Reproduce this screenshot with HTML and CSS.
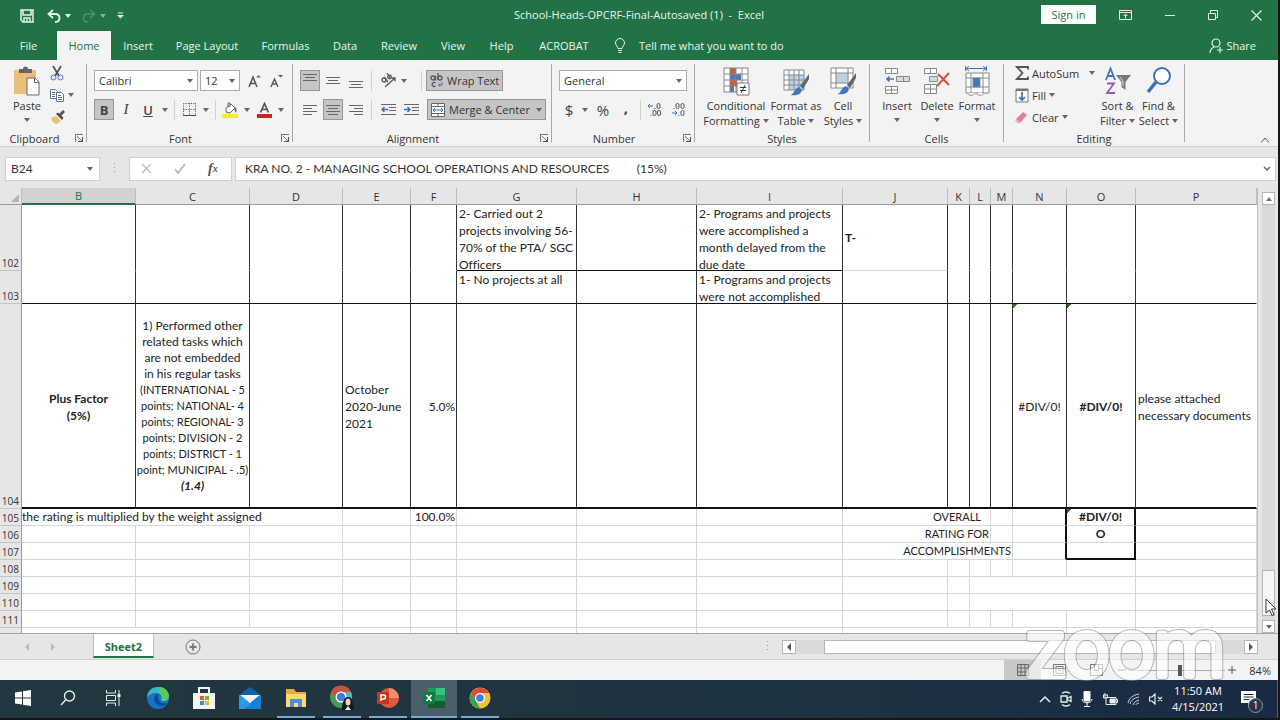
FILE: index.html
```html
<!DOCTYPE html>
<html lang="en">
<head>
<meta charset="utf-8">
<title>School-Heads-OPCRF-Final-Autosaved (1) - Excel</title>
<link rel="stylesheet" href="styles.css">
</head>
<body>
<div class="screen">
<header class="titlebar">
  <div class="quick">
    <button aria-label="Save"><svg width="14" height="14" viewBox="0 0 14 14" fill="none" stroke="#e3f3e8" stroke-width="1.5"><path d="M1 1h12v12H3L1 11zM3 1v5h8V1M4 13V9h6v4M7 10v3"/></svg></button>
    <button aria-label="Undo"><svg width="14" height="14" viewBox="0 0 14 14" fill="none" stroke="#e3f3e8" stroke-width="1.8"><path d="M6 1L1.500 5 6 9M2 5h6c3 0 4.500 1.500 4.500 4S11 13 8 13"/></svg></button>
    <i class="caret light"></i>
    <button class="faded" aria-label="Redo"><svg width="14" height="14" viewBox="0 0 14 14" fill="none" stroke="#79b58d" stroke-width="1.500"><path d="M8 1l4.500 4L8 9M12 5H6C3 5 1.500 6.500 1.500 9S3 13 6 13"/></svg></button>
    <i class="caret light faded"></i>
    <button class="more" aria-label="Customize"><svg width="7" height="7" viewBox="0 0 7 7"><path d="M1 .5h5v1H1zM0 3h7L3.500 6.500z" fill="#e3f3e8"/></svg></button>
  </div>
  <h1>School-Heads-OPCRF-Final-Autosaved (1)&nbsp; -&nbsp; Excel</h1>
  <div class="winctl">
    <button class="signin">Sign in</button>
    <button aria-label="Ribbon options"><svg width="13" height="12" viewBox="0 0 13 12" fill="none" stroke="#e3f3e8"><path d="M.5 1.500h12v9H.5zM.5 3.500h12M6.500 9.500v-4M4.500 7l2-2 2 2"/></svg></button>
    <button aria-label="Minimize"><svg width="10" height="12" viewBox="0 0 10 12"><path d="M0 6.500h10" stroke="#e3f3e8"/></svg></button>
    <button aria-label="Restore"><svg width="10" height="12" viewBox="0 0 10 12" fill="none" stroke="#e3f3e8"><path d="M.5 4.500h7v6h-7zM2.500 4V1.500h7v7H8"/></svg></button>
    <button aria-label="Close"><svg width="11" height="12" viewBox="0 0 11 12"><path d="M.5 1.500l10 10M10.500 1.500l-10 10" stroke="#e3f3e8" stroke-width="1.200"/></svg></button>
  </div>
</header>
<nav class="tabs">
  <button class="t-file">File</button><button class="t-home active">Home</button><button class="t-insert">Insert</button><button class="t-page">Page Layout</button><button class="t-form">Formulas</button><button class="t-data">Data</button><button class="t-rev">Review</button><button class="t-view">View</button><button class="t-help">Help</button><button class="t-acro">ACROBAT</button>
  <button class="tell"><svg width="10" height="15" viewBox="0 0 10 15" fill="none" stroke="#e3f3e8"><path d="M3 10.500c0-2-2.500-3-2.500-5.500a4.500 4.500 0 0 1 9 0c0 2.500-2.500 3.500-2.500 5.500zM3 12.500h4M3.500 14.500h3"/></svg><span>Tell me what you want to do</span></button>
  <button class="share"><svg width="15" height="16" viewBox="0 0 15 16" fill="none" stroke="#e3f3e8" stroke-width="1.200"><circle cx="7" cy="5" r="4"/><path d="M1 15c0-3 2-5 4-6M8 12h6M11 9v6"/></svg><span>Share</span></button>
</nav>
<section class="ribbon">
  <div class="group g-clip">
    <div class="body">
      <button class="big"><svg width="28" height="30" viewBox="0 0 28 30"><path d="M1 4h22v24H1z" fill="#e8c07a"/><path d="M6 3h4a2.500 2.500 0 0 1 5 0h4v4H6z" fill="#666"/><path d="M14 12h8l4 4v13H14z" fill="#fff" stroke="#666"/><path d="M21.500 12v4.500H26" fill="none" stroke="#666"/></svg><span>Paste</span><i class="caret"></i></button>
      <div class="stack">
        <button aria-label="Cut"><svg width="14" height="15" viewBox="0 0 14 15" fill="none"><path d="M3 0l6 10M11 0L5 10" stroke="#555" stroke-width="1.800"/><circle cx="3.500" cy="11.500" r="2.500" stroke="#4a7ab8"/><circle cx="10.500" cy="11.500" r="2.500" stroke="#4a7ab8"/></svg></button>
        <button aria-label="Copy"><svg width="14" height="14" viewBox="0 0 14 14" fill="#fff" stroke="#5b6e8c"><path d="M.5 1.500h5l2 2v7h-7z"/><path d="M2 4.500h3M2 6.500h3M2 8.500h3"/><path d="M6.500 4.500h5l2 2v7h-7z"/><path d="M8 7.500h3M8 9.500h4M8 11.500h4"/></svg><i class="caret"></i></button>
        <button aria-label="Format painter"><svg width="16" height="14" viewBox="0 0 16 14"><path d="M1 8l5-2 5 5-4 3c-3 0-5-3-6-6z" fill="#dfc678"/><path d="M6 4l6 6 1.500-2-2-2.500L15 2l-2-2-3.500 3.500-2-1z" fill="#555"/></svg></button>
      </div>
    </div>
    <footer>Clipboard<i class="launch"></i></footer>
  </div>
  <div class="group g-font">
    <div class="body rows">
      <div class="row">
        <label class="combo wide"><input aria-label="Font" value="Calibri"><i class="caret"></i></label>
        <label class="combo size"><input aria-label="Font size" value="12"><i class="caret"></i></label>
        <button class="ib grow" aria-label="Increase font size"><svg width="13" height="14" viewBox="0 0 13 14" fill="none"><path d="M1 13L5 3l4 10M2.500 9.500h5" stroke="#555" stroke-width="1.500"/><path d="M8 3.500h5L10.500 1z" fill="#3b6fb5"/></svg></button>
        <button class="ib" aria-label="Decrease font size"><svg width="13" height="14" viewBox="0 0 13 14" fill="none"><path d="M1 13l3.500-8L8 13M2 10h5" stroke="#555" stroke-width="1.400"/><path d="M8 1h5l-2.500 2.500z" fill="#555"/></svg></button>
      </div>
      <div class="row">
        <button class="ib on b">B</button><button class="ib i">I</button><button class="ib u">U</button><i class="caret"></i><i class="sep"></i>
        <button class="ib" aria-label="Borders"><svg width="13" height="13" viewBox="0 0 13 13" fill="none"><path d="M.5 0v12M6.500 0v12M12.500 0v12M0 .5h13M0 6.500h13" stroke="#777" stroke-dasharray="1.500 1"/><path d="M0 12.500h13" stroke="#444"/></svg></button><i class="caret"></i><i class="sep"></i>
        <button class="ib" aria-label="Fill color"><svg width="16" height="16" viewBox="0 0 16 16"><path d="M4 6l5-4 4 4-5 5-4-1z" fill="#fff" stroke="#666"/><path d="M6 5V1h2v4" fill="none" stroke="#666"/><path d="M12 5c3 0 3 3 2 6-2-2-1-4-2-6z" fill="#3b6fb5"/><path d="M0 12h16v4H0z" fill="#f5ee23"/></svg></button><i class="caret"></i>
        <button class="ib fc" aria-label="Font color"><svg width="15" height="16" viewBox="0 0 15 16"><path d="M3.500 10.500L7.500 1.500l4 9M5 7.500h5" fill="none" stroke="#555" stroke-width="1.700"/><path d="M0 12h15v4H0z" fill="#cf1f25"/></svg></button><i class="caret"></i>
      </div>
    </div>
    <footer>Font<i class="launch"></i></footer>
  </div>
  <div class="group g-align">
    <div class="body rows">
      <div class="row">
        <button class="ib on" aria-label="Top align"><svg width="14" height="16" viewBox="0 0 14 16"><path d="M0 1.500h14M2 4.500h10M0 7.500h14" stroke="#666"/></svg></button>
        <button class="ib" aria-label="Middle align"><svg width="14" height="16" viewBox="0 0 14 16"><path d="M0 4.500h14M2 7.500h10M0 10.500h14" stroke="#666"/></svg></button>
        <button class="ib" aria-label="Bottom align"><svg width="14" height="16" viewBox="0 0 14 16"><path d="M0 8.500h14M2 11.500h10M0 14.500h14" stroke="#666"/></svg></button>
        <i class="sep"></i>
        <button class="ib orient" aria-label="Orientation"><svg width="17" height="15" viewBox="0 0 17 15"><g fill="none" stroke="#555" stroke-width="1.300"><circle cx="4" cy="7" r="2"/><path d="M4 4l4 5M7 0l3.500 5.500"/><circle cx="9.500" cy="4" r="1.800"/><path d="M5 14L15 5M11.500 5H15v3.500"/></g></svg></button><i class="caret"></i>
        <i class="sep s2"></i>
        <button class="tb on"><svg width="13" height="15" viewBox="0 0 13 15" fill="none" stroke="#555" stroke-width="1.300"><circle cx="3" cy="5" r="2"/><path d="M5.500 3v4.500M8 0v7"/><circle cx="10" cy="5" r="2"/><path d="M5.500 10a2 2 0 1 0 0 3"/><path d="M12 9v3H8.500M10 10.500L8.500 12l1.500 1.500" stroke="#3b6fb5" stroke-width="1"/></svg>Wrap Text</button>
      </div>
      <div class="row">
        <button class="ib" aria-label="Align left"><svg width="14" height="12" viewBox="0 0 14 12"><path d="M0 1.500h14M0 4.500h9M0 7.500h14M0 10.500h9" stroke="#666"/></svg></button>
        <button class="ib on" aria-label="Center"><svg width="14" height="12" viewBox="0 0 14 12"><path d="M0 1.500h14M2 4.500h10M0 7.500h14M2 10.500h10" stroke="#666"/></svg></button>
        <button class="ib" aria-label="Align right"><svg width="14" height="12" viewBox="0 0 14 12"><path d="M0 1.500h14M5 4.500h9M0 7.500h14M5 10.500h9" stroke="#666"/></svg></button>
        <i class="sep"></i>
        <button class="ib" aria-label="Decrease indent"><svg width="15" height="12" viewBox="0 0 15 12"><path d="M0 .5h15M8 3.500h7M8 6.500h7M0 10.500h15" stroke="#666"/><path d="M7 5.500H1M3.500 3L1 5.500 3.500 8" fill="none" stroke="#3b6fb5" stroke-width="1.500"/></svg></button>
        <button class="ib" aria-label="Increase indent"><svg width="15" height="12" viewBox="0 0 15 12"><path d="M0 .5h15M8 3.500h7M8 6.500h7M0 10.500h15" stroke="#666"/><path d="M0 5.500h6M3.500 3L6 5.500 3.500 8" fill="none" stroke="#3b6fb5" stroke-width="1.500"/></svg></button>
        <i class="sep s3"></i>
        <button class="tb on merge"><svg width="14" height="14" viewBox="0 0 14 14" fill="#fff" stroke="#666"><path d="M.5.500h13v13H.5zM.5 3.500h13M.5 10.500h13M7 .5v3M7 10.500v3"/><path d="M2 7h10M4 5L2 7l2 2M10 5l2 2-2 2" fill="none" stroke="#3b6fb5"/></svg>Merge &amp; Center<i class="caret"></i></button>
      </div>
    </div>
    <footer>Alignment<i class="launch"></i></footer>
  </div>
  <div class="group g-num">
    <div class="body rows">
      <div class="row"><label class="combo fmt"><input aria-label="Number format" value="General"><i class="caret"></i></label></div>
      <div class="row">
        <button class="ib sym">$</button><i class="caret"></i><button class="ib sym pct">%</button><button class="ib sym comma">,</button><i class="sep"></i>
        <button class="ib dec" aria-label="Increase decimal"><svg width="14" height="13" viewBox="0 0 14 13" fill="none" stroke="#555"><path d="M6 3H1M3 1L1 3l2 2" stroke="#3b6fb5"/><rect x="10" y=".5" width="3" height="5" rx="1.500"/><rect x="6" y="7.500" width="3" height="5" rx="1.500"/><rect x="10.500" y="7.500" width="3" height="5" rx="1.500"/><path d="M7.500 5.500h1M3.500 12.500h1"/></svg></button>
        <button class="ib dec" aria-label="Decrease decimal"><svg width="14" height="13" viewBox="0 0 14 13" fill="none" stroke="#555"><path d="M1 10h5M4 8l2 2-2 2" stroke="#3b6fb5"/><rect x="5" y=".5" width="3" height="5" rx="1.500"/><rect x="10" y=".5" width="3" height="5" rx="1.500"/><rect x="10" y="7.500" width="3" height="5" rx="1.500"/><path d="M2.500 5.500h1M7.500 12.500h1"/></svg></button>
      </div>
    </div>
    <footer>Number<i class="launch"></i></footer>
  </div>
  <div class="group g-styles">
    <div class="body">
      <button class="big w1"><svg width="28" height="30" viewBox="0 0 28 30"><path d="M2 2h24v24H2z" fill="#fff"/><path d="M8 2h6v6H8zM8 14h7v6H8z" fill="#d0593f"/><path d="M8 8h11v6H8zM8 20h4v6H8z" fill="#4a7ab8"/><path d="M2 2h24v24H2zM8 2v24M14 2v24M20 2v24M2 8h24M2 14h24M2 20h24" fill="none" stroke="#888"/><path d="M15 17h12v12H15z" fill="#fff" stroke="#777"/><path d="M18 21.500h6M18 24.500h6M23 19l-4 8" stroke="#333"/></svg><span>Conditional<br>Formatting<i class="caret"></i></span></button>
      <button class="big w2"><svg width="28" height="30" viewBox="0 0 28 30"><path d="M2 4h20v20H2z" fill="#fff"/><path d="M7 9h15v15H7z" fill="#bcd3e6"/><path d="M2 4h20v20H2zM7 4v20M12 4v20M17 4v20M2 9h20M2 14h20M2 19h20" fill="none" stroke="#888"/><path d="M27 8l-9 12 3 3 6-10z" fill="#666"/><path d="M8 29c4 0 4-7 9-8l3 3c-1 5-7 6-12 5z" fill="#3b78bd"/></svg><span>Format as<br>Table<i class="caret"></i></span></button>
      <button class="big w3"><svg width="28" height="30" viewBox="0 0 28 30"><path d="M2 2h22v20H2z" fill="#fff"/><path d="M7 7h12v10H7z" fill="#bcd3e6"/><path d="M2 2h22v20H2zM7 2v20M19 2v20M2 7h22M2 17h22" fill="none" stroke="#888"/><path d="M27 7l-9 12 3 3 6-10z" fill="#666"/><path d="M8 28c4 0 4-7 9-8l3 3c-1 5-7 6-12 5z" fill="#3b78bd"/></svg><span>Cell<br>Styles<i class="caret"></i></span></button>
    </div>
    <footer>Styles</footer>
  </div>
  <div class="group g-cells">
    <div class="body">
      <button class="big w4"><svg width="28" height="30" viewBox="0 0 28 30" fill="#fff" stroke="#888"><path d="M2.500 2.500h12v5h-12zM8.500 2.500v5M2.500 20.500h12v7h-12zM8.500 20.500v7M2.500 24h12"/><path d="M13.500 10.500h13v5h-13zM20.500 10.500v5" fill="#cfdde9"/><path d="M11 13H4M6.500 10.500L4 13l2.500 2.500" fill="none" stroke="#3b78bd" stroke-width="1.700"/></svg><span>Insert</span><i class="caret"></i></button>
      <button class="big w5"><svg width="28" height="30" viewBox="0 0 28 30" fill="#fff" stroke="#888"><path d="M1.500 2.500h12v5h-12zM7.500 2.500v5M1.500 18.500h12v9h-12zM7.500 18.500v9M1.500 23h12"/><path d="M6.500 10.500h8v5h-8z" fill="#cfdde9"/><path d="M15 8l11 11M26 7L14 20" stroke="#d0593f" stroke-width="2.200"/></svg><span>Delete</span><i class="caret"></i></button>
      <button class="big w6"><svg width="28" height="30" viewBox="0 0 28 30" fill="#fff" stroke="#888"><path d="M3 2.500h20M6 0L3 2.500 6 5M20 0l3 2.500L20 5M2.500 0v5M23.500 0v5" fill="none" stroke="#3b78bd"/><path d="M3 7h23v20H3zM8 7v20M20 7v20M3 12h23M3 21h23"/><path d="M10 12h7v9h-7z" fill="#3b78bd"/><path d="M5 27c0 3 6 3 7 0M14 27c0 3 6 3 7 0"/></svg><span>Format</span><i class="caret"></i></button>
    </div>
    <footer>Cells</footer>
  </div>
  <div class="group g-edit">
    <div class="body">
      <div class="stack edit">
        <button><svg width="14" height="14" viewBox="0 0 14 14"><path d="M13 3.500V1H2l5.500 6L2 13h11v-2.500" fill="none" stroke="#555" stroke-width="1.800"/></svg><span>AutoSum</span><i class="caret far"></i></button>
        <button><svg width="14" height="15" viewBox="0 0 14 15" fill="#fff" stroke="#777"><path d="M1 1h12v13H1z"/><path d="M1 2h12" stroke-width="2"/><path d="M7 4v8M4 9l3 3 3-3" fill="none" stroke="#3b6fb5" stroke-width="1.700"/></svg><span>Fill</span><i class="caret"></i></button>
        <button><svg width="14" height="14" viewBox="0 0 14 14"><path d="M1 9l7-7 4 3-7 8z" fill="#e57f95"/><path d="M1 9l4 4-2 .5L0 11z" fill="#f3b7c3"/></svg><span>Clear</span><i class="caret"></i></button>
      </div>
      <button class="big w7"><svg width="28" height="30" viewBox="0 0 28 30" fill="none"><path d="M2 14L6.500 2.500 11 14M3.500 10h6" stroke="#3b78bd" stroke-width="1.800"/><path d="M3 17.500h7L3 27h8" stroke="#8d5bb5" stroke-width="1.800"/><path d="M12 9h15l-5.500 7v8l-4-3v-5z" fill="#777"/><path d="M16 11l3 4v5" stroke="#ddd"/></svg><span>Sort &amp;<br>Filter<i class="caret"></i></span></button>
      <button class="big w8"><svg width="28" height="30" viewBox="0 0 28 30" fill="none" stroke="#3b6fb5"><circle cx="17" cy="10" r="8" fill="#fff" stroke-width="2"/><path d="M11 16L3 26" stroke-width="3.500"/></svg><span>Find &amp;<br>Select<i class="caret"></i></span></button>
    </div>
    <footer>Editing</footer>
  </div>
  <button class="collapse" aria-label="Collapse ribbon"><svg width="10" height="6" viewBox="0 0 10 6"><path d="M1 5.500L5 1l4 4.500" fill="none" stroke="#555"/></svg></button>
</section>
<section class="formula">
  <label class="namebox"><input aria-label="Name box" value="B24"><i class="caret"></i></label>
  <i class="grip"></i>
  <div class="fx">
    <button aria-label="Cancel"><svg width="11" height="11" viewBox="0 0 11 11"><path d="M1 1l9 9M10 1l-9 9" stroke="#bbb" stroke-width="1.300"/></svg></button>
    <button aria-label="Enter"><svg width="12" height="11" viewBox="0 0 12 11"><path d="M1 6l3 4 7-9" fill="none" stroke="#bbb" stroke-width="1.800"/></svg></button>
    <button class="fn" aria-label="Insert function">f<small>x</small></button>
  </div>
  <label class="fbar"><input aria-label="Formula" value="KRA NO. 2 - MANAGING SCHOOL OPERATIONS AND RESOURCES         (15%)"><svg width="8" height="6" viewBox="0 0 8 6"><path d="M1 1l3 3 3-3" fill="none" stroke="#666" stroke-width="1.500"/></svg></label>
</section>
<main class="sheet">
  <div class="gridwrap">
  <table>
    <colgroup><col class="c0"><col class="cB"><col class="cB"><col class="cD"><col class="cE"><col class="cF"><col class="cG"><col class="cG"><col class="cI"><col class="cJ"><col class="cK"><col class="cL"><col class="cK"><col class="cN"><col class="cO"><col></colgroup>
    <thead><tr><th class="corner"><svg width="8" height="8" viewBox="0 0 8 8"><path d="M8 0v8H0z" fill="#b5b5b5"/></svg></th><th class="sel">B</th><th>C</th><th>D</th><th>E</th><th>F</th><th>G</th><th>H</th><th>I</th><th>J</th><th>K</th><th>L</th><th>M</th><th>N</th><th>O</th><th>P</th></tr></thead>
    <tbody>
      <tr class="r102 ink"><th>102</th><td></td><td></td><td></td><td></td><td></td><td class="ul"><div class="clip">2- Carried out 2<br>projects involving 56-<br>70% of the PTA/ SGC<br>Officers</div></td><td class="ul"></td><td class="ul"><div class="clip">2- Programs and projects<br>were accomplished a<br>month delayed from the<br>due date</div></td><td class="mid gl"><b>T-</b></td><td></td><td></td><td></td><td></td><td></td><td></td></tr>
      <tr class="r103 ink base"><th>103</th><td></td><td></td><td></td><td></td><td></td><td><div class="clip">1- No projects at all</div></td><td></td><td><div class="clip">1- Programs and projects<br>were not accomplished</div></td><td></td><td></td><td></td><td></td><td></td><td></td><td></td></tr>
      <tr class="r104 ink base"><th>104</th><td class="mid ctr"><b>Plus Factor<br>(5%)</b></td><td class="mid ctr tight">1) Performed other<br>related tasks which<br>are not embedded<br>in his regular tasks<br><span class="caps">(INTERNATIONAL - 5<br>points; NATIONAL- 4<br>points; REGIONAL- 3<br>points; DIVISION - 2<br>points; DISTRICT - 1<br>point; MUNICIPAL - .5)</span><br><b><em>(1.4)</em></b></td><td></td><td class="mid">October<br>2020-June<br>2021</td><td class="mid end">5.0%</td><td></td><td></td><td></td><td></td><td></td><td></td><td></td><td class="mid ctr err">#DIV/0!</td><td class="mid ctr err"><b>#DIV/0!</b></td><td class="mid">please attached<br>necessary documents</td></tr>
      <tr><th>105</th><td colspan="3" class="spill">the rating is multiplied by the weight assigned</td><td></td><td class="end">100.0%</td><td></td><td></td><td></td><td colspan="3" class="lab l1">OVERALL</td><td></td><td class="pre"></td><td class="ctr err box"><b>#DIV/0!</b></td><td></td></tr>
      <tr><th>106</th><td></td><td></td><td></td><td></td><td></td><td></td><td></td><td></td><td colspan="3" class="lab l2">RATING FOR</td><td></td><td class="pre"></td><td class="ctr box"><b>O</b></td><td></td></tr>
      <tr><th>107</th><td></td><td></td><td></td><td></td><td></td><td></td><td></td><td></td><td colspan="4" class="lab l3">ACCOMPLISHMENTS</td><td class="pre"></td><td class="box last"></td><td></td></tr>
      <tr><th>108</th><td></td><td></td><td></td><td></td><td></td><td></td><td></td><td></td><td></td><td></td><td></td><td></td><td></td><td></td><td></td></tr>
      <tr><th>109</th><td></td><td></td><td></td><td></td><td></td><td></td><td></td><td></td><td></td><td></td><td colspan="4"></td><td></td></tr>
      <tr><th>110</th><td></td><td></td><td></td><td></td><td></td><td></td><td></td><td></td><td></td><td></td><td colspan="4"></td><td></td></tr>
      <tr><th>111</th><td></td><td></td><td></td><td></td><td></td><td></td><td></td><td></td><td></td><td></td><td></td><td></td><td></td><td></td><td></td></tr>
      <tr><th>112</th><td colspan="3"></td><td></td><td></td><td></td><td></td><td></td><td colspan="5"></td><td></td><td></td></tr>
    </tbody>
  </table>
  </div>
  <div class="vscroll"><button aria-label="Scroll up"><i class="caret up"></i></button><div class="track"><div class="thumb"></div></div><button aria-label="Scroll down"><i class="caret"></i></button></div>
</main>
<section class="sheettabs">
  <div class="navs"><i class="tri left"></i><i class="tri right"></i></div>
  <button class="stab">Sheet2</button>
  <button class="add" aria-label="New sheet"><svg width="16" height="16" viewBox="0 0 16 16" fill="none" stroke="#777"><circle cx="8" cy="8" r="7"/><path d="M8 4.500v7M4.500 8h7" stroke-width="1.800"/></svg></button>
  <i class="grip"></i>
  <div class="hscroll"><button aria-label="Scroll left"><i class="tri left dark"></i></button><div class="htrack"><div class="hthumb"></div></div><button aria-label="Scroll right"><i class="tri right dark"></i></button></div>
</section>
<footer class="status">
  <button class="vw on" aria-label="Normal view"><svg width="12" height="12" viewBox="0 0 12 12" fill="none" stroke="#666"><path d="M.5.500h11v11H.5zM4 .5v11M8 .5v11M.5 4h11M.5 8h11"/></svg></button>
  <button class="vw" aria-label="Page layout view"><svg width="13" height="12" viewBox="0 0 13 12" fill="none" stroke="#777"><path d="M.5.500h12v11H.5zM3 2.500h7v7H3zM5 4.500h3M5 6.500h3"/></svg></button>
  <button class="vw" aria-label="Page break view"><svg width="13" height="12" viewBox="0 0 13 12" fill="none" stroke="#777"><path d="M.5.500h12v11H.5zM4.500.500v6h4v-6M8.500 4.500h4"/></svg></button>
  <button class="pm" aria-label="Zoom out"><svg width="8" height="8" viewBox="0 0 8 8"><path d="M0 4h8" stroke="#555"/></svg></button><input type="range" aria-label="Zoom" min="10" max="150" value="84"><button class="pm" aria-label="Zoom in"><svg width="8" height="8" viewBox="0 0 8 8"><path d="M0 4h8M4 0v8" stroke="#555"/></svg></button><span class="level">84%</span>
</footer>
<footer class="taskbar">
  <button class="sys" aria-label="Start"><svg width="16" height="16" viewBox="0 0 16 16" fill="#fff"><path d="M0 2.500l7-1v6H0zM8 1.300L16 0v7.500H8zM0 8.500h7v6l-7-1zM8 8.500h8V16l-8-1.300z"/></svg></button>
  <button class="sys" aria-label="Search"><svg width="16" height="16" viewBox="0 0 16 16" fill="none" stroke="#e8eef0" stroke-width="1.400"><circle cx="9.500" cy="6" r="5"/><path d="M6 9.500L1 15"/></svg></button>
  <button class="sys" aria-label="Task view"><svg width="16" height="16" viewBox="0 0 16 16" fill="none" stroke="#e8eef0"><path d="M1.500 0v3h9V0M1.500 16v-3h9v3M1.500 5.500h9v5h-9zM14 0v16"/><path d="M12.500 4h3v3h-3z" fill="#e8eef0" stroke="none"/></svg></button>
  <button aria-label="Edge"><svg width="24" height="24" viewBox="0 0 24 24"><circle cx="12" cy="12" r="11" fill="#1673c8"/><path d="M1 12C1 4 7 1 12 1c7 0 11 5 11 9 0 5-6 6-8 4 2-4-1-7-4-7-5 0-9 2-10 5z" fill="#36b6c7"/><path d="M13 1c6 0 10 5 10 9 0 5-6 6-8 4 2-3 0-6-2-7z" fill="#5cc85a"/><path d="M12 8c-6 1-5 11 3 12 3 0 5-1 6-3-3 1-10 1-9-9z" fill="#0d4a90"/></svg></button>
  <button aria-label="Store"><svg width="22" height="24" viewBox="0 0 22 24"><path d="M0 7h22v16H0z" fill="#f4f4f4"/><path d="M6 7V2h10v5" fill="none" stroke="#f4f4f4" stroke-width="2"/><path d="M7 10h4v4H7z" fill="#e35a2c"/><path d="M12 10h4v4h-4z" fill="#7eb82f"/><path d="M7 15h4v4H7z" fill="#2a93d8"/><path d="M12 15h4v4h-4z" fill="#f2b51d"/></svg></button>
  <button aria-label="Mail"><svg width="24" height="24" viewBox="0 0 24 24"><path d="M1 9L12 1l11 8v14H1z" fill="#1262a8"/><path d="M1 9v14h22z" fill="#2a9be8"/><path d="M23 9v14H6z" fill="#1680d2"/><path d="M2 9h20l-10 8z" fill="#eef6fb"/></svg></button>
  <button class="run" aria-label="File Explorer"><svg width="22" height="20" viewBox="0 0 22 20"><path d="M1 1h8l2 3h10v15H1z" fill="#e9ae33"/><path d="M1 6h20v13H1z" fill="#fbd873"/><path d="M5 19v-8h12v8h-4v-4H9v4z" fill="#4a92c8"/></svg></button>
  <button class="run" aria-label="Chrome profile"><svg width="26" height="26" viewBox="0 0 26 26"><circle cx="12" cy="12" r="11" fill="#459b57"/><path d="M2 7a11 11 0 0 1 20 0H12l-4 8z" fill="#c95243"/><path d="M22 7c1 2 1 4 1 6H16l-4-6z" fill="#5fb3b8"/><circle cx="12" cy="12" r="5.500" fill="#fff"/><circle cx="12" cy="12" r="4.200" fill="#3e7de0"/><path d="M13 25c0-5 1-13 6-13s5 8 6 13z" fill="#17181c"/><ellipse cx="19" cy="17" rx="2.500" ry="3.500" fill="#f0cfc0"/><path d="M16 25l3-4 3 4z" fill="#eee"/></svg></button>
  <button class="run" aria-label="PowerPoint"><svg width="24" height="22" viewBox="0 0 24 22"><circle cx="13" cy="11" r="10" fill="#dd5a3a"/><path d="M13 1a10 10 0 0 1 10 10H13z" fill="#f58c70"/><path d="M1 5h12v12H1z" fill="#bf3b1e"/><path d="M5 14V8h2.500a2 2 0 0 1 0 4H5" fill="none" stroke="#fff" stroke-width="1.500"/></svg></button>
  <button class="run cur" aria-label="Excel"><svg width="24" height="22" viewBox="0 0 24 22"><path d="M6 1h17v20H6z" fill="#1e9b57"/><path d="M14 1h9v7h-9z" fill="#36c37e"/><path d="M6 14h17v7H6z" fill="#125f34"/><path d="M1 5h12v12H1z" fill="#107c41"/><path d="M4.500 8l5 6M9.500 8l-5 6" stroke="#fff" stroke-width="1.600"/></svg></button>
  <button class="run" aria-label="Chrome"><svg width="24" height="24" viewBox="0 0 24 24"><circle cx="12" cy="12" r="10.500" fill="#f2c230"/><path d="M3 7a10.500 10.500 0 0 1 18 0h-9l-4 8z" fill="#dc4a3c"/><path d="M3 7l5 8 4 7.500A10.500 10.500 0 0 1 3 7z" fill="#36a153"/><circle cx="12" cy="12" r="5" fill="#fff"/><circle cx="12" cy="12" r="3.800" fill="#3e7de0"/></svg></button>
  <div class="tray">
    <svg width="12" height="8" viewBox="0 0 12 8"><path d="M1 7l5-5 5 5" fill="none" stroke="#e8eef0" stroke-width="1.500"/></svg>
    <svg width="12" height="16" viewBox="0 0 12 16" fill="none" stroke="#e8eef0"><path d="M2 2.500c2-2 6-2 8 0M2 13.500c2 2 6 2 8 0M1 5h6v6H1zM7 7.500l4-2v5l-4-2" stroke-width="1.300"/></svg>
    <svg width="12" height="16" viewBox="0 0 12 16" fill="none" stroke="#fff"><rect x="3" y="0" width="6" height="10" rx="1" fill="#fff"/><path d="M1 8c0 5 10 5 10 0M6 12v3M3 15.500h6"/></svg>
    <svg width="16" height="13" viewBox="0 0 16 13" fill="none" stroke="#e8eef0"><path d="M4 4.500h10v7H4zM14 6.500h1.500v3H14M3 0v5M1 2h5M1.500 2v3h4V2"/><path d="M8 6h5v4H8z" fill="#e8eef0"/></svg>
    <svg width="13" height="13" viewBox="0 0 13 13" fill="none" stroke="#d2dadf"><path d="M1 10C2 5 6 2 12 1M3 11c1-4 4-6 9-7M6 12c1-3 3-4 6-5M9 12c0-1 1-2 3-2"/></svg>
    <svg width="14" height="12" viewBox="0 0 14 12" fill="none" stroke="#e8eef0"><path d="M.5 4v4h2.500l3 3V1L3 4zM9 4l4 4M13 4L9 8" stroke-width="1.200"/></svg>
    <div class="clock">11:50 AM<br>4/15/2021</div>
    <div class="notif"><svg width="18" height="18" viewBox="0 0 18 18"><path d="M1 1h15v12h-5l-3 4v-4H1z" fill="#fff"/><path d="M3.500 4.500h10M3.500 7h10M3.500 9.500h6" stroke="#1c2b42"/></svg><span>1</span></div>
  </div>
</footer>
<svg class="watermark" width="210" height="54" viewBox="0 0 210 54" role="img" aria-label="zoom">
  <defs><text id="mark" x="2" y="47">zoom</text></defs>
  <use href="#mark" class="rim"/><use href="#mark" class="core"/>
</svg>
<svg class="cursor" width="12" height="19" viewBox="0 0 12 19"><path d="M1 1v14l3.500-3 2.500 5.500 2-1L6.500 11H11z" fill="#fff" stroke="#333"/></svg>
</div>
</body>
</html>
```
FILE: styles.css
```css
* { box-sizing: border-box; }
body { margin: 0; background: #161616; font-family: "Open Sans", "Noto Sans", sans-serif; font-size: 12px; color: #333; }
.screen { position: relative; display: flex; flex-direction: column; height: 100vh; padding: 0 2px 2px 0; overflow: hidden; }
button { font: inherit; color: inherit; background: none; border: 0; padding: 0; display: flex; align-items: center; justify-content: center; white-space: nowrap; }
input { font: inherit; color: inherit; border: 0; padding: 0; background: none; min-width: 0; flex: 1; width: 100%; }
svg { flex: none; display: block; }
.caret { flex: none; display: inline-block; border: 3px solid transparent; border-top: 4px solid #666; border-bottom: 0; }
.caret.light { border-top-color: #e3f3e8; }
.caret.up { border-top: 0; border-bottom: 4px solid #777; }
.faded { opacity: .5; }

.titlebar { flex: none; display: grid; grid-template-columns: 1fr auto 1fr; align-items: center; height: 31px; background: #217346; color: #e9f6ed; }
.titlebar h1 { margin: 0; font-size: 11px; line-height: 14px; padding-bottom: 2px; font-weight: 400; }
.quick { display: flex; align-items: center; padding-left: 20px; }
.quick button { margin-right: 4px; }
.quick button:first-child { margin-right: 13px; }
.quick .caret { margin-right: 11px; }
.winctl { display: flex; align-items: center; justify-content: flex-end; gap: 33px; padding: 0 16px 2px 0; }
.signin { width: 55px; height: 19px; background: #fff; color: #217346; font-size: 11px; margin-right: -10px; }

.tabs { flex: none; display: flex; align-items: stretch; height: 29px; background: #217346; color: #e9f6ed; font-size: 11px; }
.t-file { width: 57px; }
.t-home { width: 54px; }
.t-home.active { background: #f3f3f3; color: #217346; }
.t-insert { width: 54px; }
.t-page { width: 84px; }
.t-form { width: 73px; }
.t-data { width: 46px; }
.t-rev { width: 62px; }
.t-view { width: 46px; }
.t-help { width: 51px; }
.t-acro { width: 74px; }
.tell { gap: 14px; margin-left: 14px; }
.share { gap: 2px; margin-left: auto; padding-right: 22px; }

.ribbon { flex: none; display: flex; height: 87px; background: #f3f3f3; border-bottom: 1px solid #d2d2d2; font-size: 11px; }
.group { flex: none; display: flex; flex-direction: column; position: relative; margin: 4px 0; border-right: 1px solid #a8a8a8; }
.group footer { flex: none; display: flex; justify-content: center; height: 15px; line-height: 15px; }
.body { flex: none; display: flex; height: 67px; }
.launch { position: absolute; right: 3px; bottom: 0; width: 8px; height: 8px; border-top: 1px solid #777; border-left: 1px solid #777; background: linear-gradient(45deg, transparent 45%, #777 45%, #777 55%, transparent 55%) center / 5px 5px no-repeat; }
.launch::after { content: ""; position: absolute; right: 0; bottom: 0; width: 4px; height: 4px; border-right: 1px solid #555; border-bottom: 1px solid #555; }
.g-clip { width: 87px; }
.g-clip footer { padding-right: 17px; }
.g-font { width: 206px; }
.g-font footer { padding-right: 18px; }
.g-align { width: 259px; }
.g-align footer { padding-right: 18px; }
.g-num { width: 143px; }
.g-num footer { padding-right: 18px; }
.g-styles { width: 175px; }
.g-cells { width: 134px; }
.g-edit { width: 181px; }
.big { flex-direction: column; justify-content: flex-start; align-items: center; padding-top: 2px; line-height: 15px; }
.big > svg { margin-bottom: 2px; }
.big > .caret { margin-top: 5px; }
.big span .caret { margin-left: 3px; vertical-align: 2px; }
.g-clip .big { width: 50px; padding-left: 4px; }
.g-styles .body { padding-left: 6px; }
.w1 { width: 70px; }
.w2 { width: 50px; }
.w3 { width: 44px; }
.g-cells .body { padding-left: 7px; }
.g-cells .big { width: 40px; }
.stack { display: flex; flex-direction: column; justify-content: space-between; padding: 0 0 5px; }
.stack button { justify-content: flex-start; gap: 4px; height: 18px; }
.edit { width: 82px; margin-left: 11px; }
.edit button { gap: 3px; }
.edit .far { margin-left: 7px; }
.w7, .w8 { width: 41px; }
.rows { flex-direction: column; gap: 8px; padding: 6px 0 0 7px; }
.row { display: flex; align-items: center; height: 21px; }
.combo { display: flex; align-items: center; height: 21px; padding: 0 4px; background: #fff; border: 1px solid #ababab; }
.combo.wide { width: 104px; margin-right: 2px; }
.combo.size { width: 40px; margin-right: 4px; }
.combo.fmt { width: 128px; }
.ib { width: 20px; height: 21px; margin-right: 3px; font-size: 13px; color: #444; }
.on { background: #c5c5c5; border: 1px solid #969696; }
.b { font-weight: 700; }
.i { font-style: italic; font-family: "Liberation Serif", serif; font-size: 15px; }
.u { text-decoration: underline; font-weight: 600; }
.sep { flex: none; width: 1px; height: 20px; background: #d0d0d0; margin: 0 6px 0 2px; }
.g-font .ib { margin-right: 2px; }
.g-font .ib + .caret { margin-left: 2px; }
.g-font .sep { margin: 0 4px 0 6px; }
.g-font .fc { margin-left: 4px; }
.g-align .sep.s2 { margin: 0 4px 0 14px; }
.g-align .sep.s3 { margin: 0 1px 0 1px; visibility: hidden; }
.tb { height: 21px; padding: 0 3px; gap: 4px; font-size: 11px; }
.merge { width: 119px; }
.merge .caret { margin-left: auto; }
.sym { font-size: 15px; }
.pct { margin-left: 5px; }
.comma { font-weight: 700; padding-bottom: 6px; }
.g-num .sep { margin: 0 3px 0 1px; }
.dec { margin-right: 4px; }
.collapse { margin: auto 8px 3px auto; }

.formula { flex: none; display: flex; align-items: center; height: 41px; padding: 2px 2px 0 5px; background: #e6e6e6; }
.formula > label, .fx { height: 24px; background: #fff; border: 1px solid #d0d0d0; display: flex; align-items: center; }
.namebox { width: 95px; padding: 0 6px 0 5px; font-family: Lato, sans-serif; }
.grip { width: 3px; height: 11px; margin: 0 13px; background: repeating-linear-gradient(#999 0 1px, transparent 1px 4px) center / 1px 100% no-repeat; }
.fx { width: 103px; gap: 22px; padding-left: 11px; margin-right: 3px; }
.fn { font: italic 700 14px "Liberation Serif", serif; color: #555; }
.fn small { font-size: 10px; }
.fbar { flex: 1; padding: 0 4px 0 9px; font-family: Lato, sans-serif; }
.fbar input { white-space: pre; }

.sheet { flex: 1; min-height: 0; display: flex; background: #e6e6e6; }
.gridwrap { flex: 1; min-width: 0; overflow: hidden; background: #fff; border-right: 1px solid #c0c0c0; }
table { width: 100%; table-layout: fixed; border-collapse: separate; border-spacing: 0; font-family: Lato, sans-serif; font-size: 12px; line-height: 17px; font-variant-ligatures: none; color: #222; }
.c0 { width: 22px; } .cB { width: 114px; } .cD { width: 93px; } .cE { width: 68px; } .cF { width: 46px; } .cG { width: 120px; } .cI { width: 146px; } .cJ { width: 105px; } .cK { width: 22px; } .cL { width: 21px; } .cN { width: 54px; } .cO { width: 69px; }
th { background: #e6e6e6; font-family: "Open Sans", sans-serif; font-weight: 400; font-size: 11px; padding: 0; color: #333; }
thead th { height: 17px; line-height: 15px; border-right: 1px solid #bdbdbd; border-bottom: 1px solid #9b9b9b; }
thead .sel { background: #d2d2d2; border-bottom: 2px solid #217346; color: #217346; }
.corner svg { margin: 3px 0 0 11px; }
tbody th { font-size: 10px; line-height: 12px; vertical-align: bottom; text-align: right; border-right: 1px solid #9b9b9b; border-bottom: 1px solid #c4c4c4; padding: 0 2px 1px 0; }
td { height: 17px; line-height: 16px; padding: 0 2px; vertical-align: top; border-right: 1px solid #d6d6d6; border-bottom: 1px solid #d6d6d6; white-space: nowrap; }
.ink td { border-right-color: #333; border-bottom-color: transparent; line-height: 17px; }
.ink td:last-child { border-right-color: transparent; }
.ink.base td { border-bottom-color: #111; }
.ink td.ul { border-bottom-color: #111; }
.ink td.gl { border-bottom-color: #d6d6d6; }
.r102 td { height: 66px; } .r103 td { height: 33px; } .r104 td { height: 205px; }
.r104 td { border-bottom-width: 2px; }
.r102 .clip { height: 65px; }
.r103 .clip { height: 32px; }
td.mid { vertical-align: middle; }
.r104 td.mid { padding-top: 2px; }
.ctr { text-align: center; }
.end { text-align: right; padding-right: 1px; }
.ink td.tight { line-height: 16px; padding: 0; }
.caps { font-size: 11px; }
.spill { padding: 0; }
.lab { text-align: right; font-size: 11px; }
.l1 { padding-right: 9px; } .l2 { padding-right: 1px; } .l3 { padding-right: 1px; }
.err { background: linear-gradient(135deg, #1c7a30 3px, transparent 3px) no-repeat; }
.pre { border-right: 2px solid #111; }
.box { border-right: 2px solid #111; }
.last { border-bottom: 2px solid #111; }
.vscroll { flex: none; width: 20px; display: flex; flex-direction: column; padding: 4px 3px 0 4px; }
.vscroll button { flex: none; height: 13px; background: #fff; border: 1px solid #b5b5b5; }
.track { flex: 1; display: flex; flex-direction: column; justify-content: flex-end; background: #dadada; padding-bottom: 4px; }
.thumb { height: 46px; background: #f6f6f6; border: 1px solid #b5b5b5; }

.sheettabs { flex: none; display: flex; align-items: center; height: 27px; background: #e6e6e6; border-top: 1px solid #a5a5a5; border-bottom: 1px solid #cfcfcf; padding-right: 20px; }
.navs { display: flex; gap: 22px; padding-left: 25px; width: 93px; }
.tri { border: 4px solid transparent; }
.tri.left { border-left: 0; border-right: 4px solid #bbb; }
.tri.right { border-right: 0; border-left: 4px solid #bbb; }
.tri.left.dark { border-right-color: #555; }
.tri.right.dark { border-left-color: #555; }
.stab { align-self: flex-start; width: 61px; height: 24px; padding-top: 2px; background: #fff; color: #217346; font-size: 11px; font-weight: 700; border: 1px solid #bbb; border-top: 0; border-bottom: 2px solid #217346; }
.add { margin-left: 31px; }
.sheettabs .grip { margin: 0 13px 0 auto; }
.hscroll { display: flex; width: 476px; height: 14px; }
.hscroll button { width: 14px; background: #fff; border: 1px solid #b5b5b5; }
.htrack { flex: 1; display: flex; background: #dadada; padding: 0 28px 0 28px; }
.hthumb { flex: 1; background: #fff; border: 1px solid #b5b5b5; }

.status { flex: none; display: flex; align-items: center; justify-content: flex-end; height: 20px; background: #f3f3f3; padding-right: 7px; font-size: 11px; }
.vw { width: 37px; height: 20px; }
.vw.on { background: #c8c8c8; border: 0; }
.pm { width: 14px; height: 20px; }
.status input { flex: none; width: 96px; height: 12px; margin: 0; appearance: none; background: linear-gradient(#aaa, #aaa) center / 100% 1px no-repeat; }
.status input::-webkit-slider-thumb { appearance: none; width: 4px; height: 11px; background: #555; }
.level { padding-left: 10px; }

.taskbar { flex: none; display: flex; height: 38px; background: linear-gradient(90deg, #22373f, #1e3340 60%, #1a2a44); color: #fff; }
.taskbar > button { width: 46px; border-bottom: 2px solid transparent; }
.taskbar > button.sys { width: 45px; }
.taskbar > button.run { background: linear-gradient(#76a9dc, #76a9dc) bottom / 38px 2px no-repeat border-box; }
.taskbar > button.cur { background: linear-gradient(#76a9dc, #76a9dc) bottom / 46px 2px no-repeat border-box, #4a5f68; }
.tray { display: flex; align-items: center; gap: 9px; margin-left: auto; }
.clock { width: 52px; text-align: center; font-size: 11px; line-height: 16px; white-space: nowrap; }
.notif { position: relative; width: 45px; border-right: 1px solid #51607a; height: 38px; padding: 10px 0 0 7px; }
.notif span { position: absolute; right: 14px; top: 18px; width: 15px; height: 15px; border: 1px solid #8b95a5; border-radius: 50%; background: #26334a; font-size: 10px; line-height: 13px; text-align: center; }
.watermark { position: absolute; right: 46px; bottom: 37px; font: 300 80px Roboto, sans-serif; opacity: .6; stroke-linejoin: round; pointer-events: none; }
.rim { fill: #8a8a8a; stroke: #8a8a8a; stroke-width: 8px; }
.core { fill: #fff; stroke: #fff; stroke-width: 6px; }
.cursor { position: absolute; right: 3px; bottom: 103px; }
```
